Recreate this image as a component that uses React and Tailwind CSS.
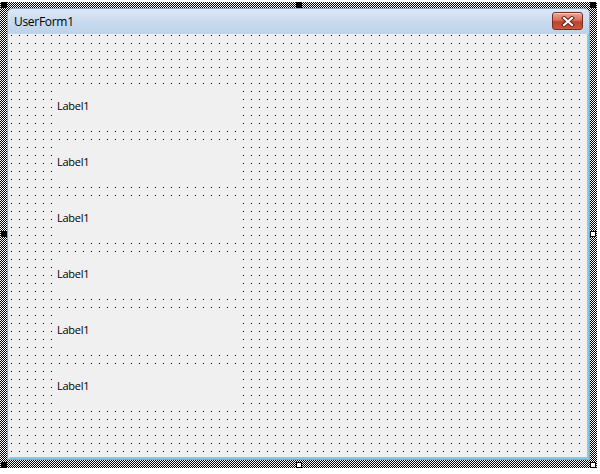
import React from "react";

function Handle({ className, white }) {
  return (
    <div
      className={`absolute w-[6px] h-[6px] ${white ? "bg-white border border-black" : "bg-black"} ${className}`}
    />
  );
}

function CloseButton() {
  return (
    <div className="w-[31px] h-[18px] rounded-[3px] border border-[#7b2a20] bg-[linear-gradient(to_bottom,#e9a796_0%,#d9715d_45%,#c0412c_55%,#c75a3f_100%)] flex items-center justify-center shadow-[inset_0_1px_0_rgba(255,255,255,0.5)]">
      <svg width="14" height="11" viewBox="0 0 14 11">
        <path d="M3 2 L11 9 M11 2 L3 9" stroke="#5a1d14" strokeWidth="4" strokeLinecap="square" />
        <path d="M3 2 L11 9 M11 2 L3 9" stroke="#ffffff" strokeWidth="2.2" strokeLinecap="square" />
      </svg>
    </div>
  );
}

export default function App() {
  const labels = [0, 1, 2, 3, 4, 5];
  return (
    <div className="w-[600px] h-[474px] bg-white relative overflow-hidden">
      <div className="absolute left-0 top-[2px] w-[597px] h-[466px] bg-[image:repeating-conic-gradient(#000_0_25%,#fff_0_50%)] bg-[length:2px_2px] p-[7px] pb-[8px] pt-[6px] flex">
        <div className="flex-1 flex flex-col bg-[#f0f0f0] rounded-t-[6px] border border-[#8fa3bd] overflow-hidden">
          <div className="h-[25px] shrink-0 flex items-center justify-between pl-[6px] pr-[6px] bg-[linear-gradient(to_bottom,#dce8f6_0%,#c9dbef_50%,#bdd2ea_100%)] border-b border-[#c5d5e8]">
            <span className="text-[12px] tracking-[-0.3px] text-black font-['Open_Sans',sans-serif] leading-none pt-[1px]">UserForm1</span>
            <CloseButton />
          </div>
          <div className="flex-1 flex border-l-2 border-[#dfe8f3] border-r-2 border-r-[#7fcde4] border-b-2 border-b-[#7fcde4]">
            <div className="flex-1 flex flex-col gap-4 pt-[54px] pl-[42px] bg-[#000] bg-[image:linear-gradient(to_right,#f0f0f0_7px,transparent_7px),linear-gradient(to_bottom,#f0f0f0_7px,#000_7px)] bg-[length:8px_8px] bg-[position:2px_2px]">
              {labels.map((i) => (
                <div key={i} className="w-[187px] h-[40px] bg-[#f0f0f0] pl-[5px] pt-[10px] text-[11px] tracking-[-0.25px] leading-[15px] text-black font-['Open_Sans',sans-serif]">
                  Label1
                </div>
              ))}
            </div>
          </div>
        </div>
      </div>
      <Handle className="left-[1px] top-[2px]" />
      <Handle className="left-[296px] top-[2px]" />
      <Handle className="left-[590px] top-[2px]" />
      <Handle className="left-[1px] top-[231px]" />
      <Handle className="left-[590px] top-[231px]" white />
      <Handle className="left-[1px] top-[462px]" />
      <Handle className="left-[296px] top-[462px]" white />
      <Handle className="left-[590px] top-[462px]" white />
    </div>
  );
}
